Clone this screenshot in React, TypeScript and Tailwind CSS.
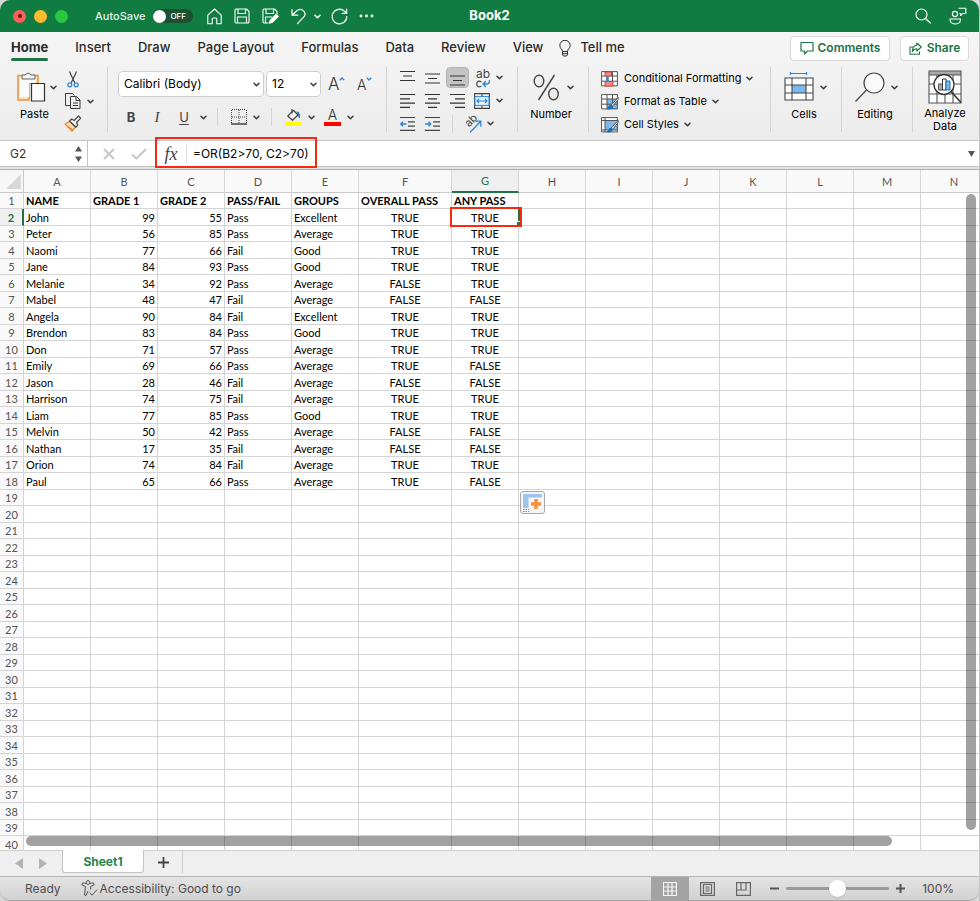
import React from 'react';

const columns = ['A', 'B', 'C', 'D', 'E', 'F', 'G', 'H', 'I', 'J', 'K', 'L', 'M', 'N'];

const headings = ['NAME', 'GRADE 1', 'GRADE 2', 'PASS/FAIL', 'GROUPS', 'OVERALL PASS', 'ANY PASS'];

const records = [
  ['John', '99', '55', 'Pass', 'Excellent', 'TRUE', 'TRUE'],
  ['Peter', '56', '85', 'Pass', 'Average', 'TRUE', 'TRUE'],
  ['Naomi', '77', '66', 'Fail', 'Good', 'TRUE', 'TRUE'],
  ['Jane', '84', '93', 'Pass', 'Good', 'TRUE', 'TRUE'],
  ['Melanie', '34', '92', 'Pass', 'Average', 'FALSE', 'TRUE'],
  ['Mabel', '48', '47', 'Fail', 'Average', 'FALSE', 'FALSE'],
  ['Angela', '90', '84', 'Fail', 'Excellent', 'TRUE', 'TRUE'],
  ['Brendon', '83', '84', 'Pass', 'Good', 'TRUE', 'TRUE'],
  ['Don', '71', '57', 'Pass', 'Average', 'TRUE', 'TRUE'],
  ['Emily', '69', '66', 'Pass', 'Average', 'TRUE', 'FALSE'],
  ['Jason', '28', '46', 'Fail', 'Average', 'FALSE', 'FALSE'],
  ['Harrison', '74', '75', 'Fail', 'Average', 'TRUE', 'TRUE'],
  ['Liam', '77', '85', 'Pass', 'Good', 'TRUE', 'TRUE'],
  ['Melvin', '50', '42', 'Pass', 'Average', 'FALSE', 'FALSE'],
  ['Nathan', '17', '35', 'Fail', 'Average', 'FALSE', 'FALSE'],
  ['Orion', '74', '84', 'Fail', 'Average', 'TRUE', 'TRUE'],
  ['Paul', '65', '66', 'Pass', 'Average', 'TRUE', 'FALSE'],
];

const sheet = [headings, ...records];
const rowNumbers = Array.from({ length: 40 }, (_, i) => i + 1);

const alignments = ['text-left', 'text-right', 'text-right', 'text-left', 'text-left', 'text-center', 'text-center'];

const Caret = ({ className = 'text-[#3b3b3b]' }: { className?: string }) => (
  <svg width="7" height="7" viewBox="0 0 7 7" fill="none" stroke="currentColor" strokeWidth="1.5" strokeLinecap="round" strokeLinejoin="round" className={`shrink-0 ${className}`}>
    <path d="M1 2.2 3.5 4.8 6 2.2" />
  </svg>
);

const TitleBar = () => (
  <header className="relative flex h-8 shrink-0 items-center justify-between rounded-t-[10px] bg-[#107c41] pl-[13px] pr-3 text-white">
    <div className="flex items-center">
      <div className="flex gap-2">
        <button aria-label="Close" className="flex size-[13px] items-center justify-center rounded-full bg-[#fe5f57]">
          <span className="size-1 rounded-full bg-[#7a0b06]" />
        </button>
        <button aria-label="Minimize" className="size-[13px] rounded-full bg-[#febb2e]" />
        <button aria-label="Zoom window" className="size-[13px] rounded-full bg-[#28c840]" />
      </div>
      <label className="ml-[27px] flex items-center gap-2 text-[11px] font-medium text-[#e3f0e8]">
        AutoSave
        <input type="checkbox" className="peer sr-only" />
        <span className="flex h-[14px] w-10 items-center gap-1 rounded-full bg-[#1d4f33] text-[8px] text-white">
          <span className="size-[13px] rounded-full bg-white" />
          OFF
        </span>
      </label>
      <button aria-label="Home" className="ml-[14px]">
        <svg width="15" height="17" viewBox="0 0 15 17" fill="none" stroke="currentColor" strokeWidth="1.1" strokeLinejoin="round">
          <path d="M.8 7.2 7.5 1l6.7 6.2v8.6H9.8V11a1 1 0 0 0-1-1H6.200a1 1 0 0 0-1 1v4.800H.8z" />
        </svg>
      </button>
      <button aria-label="Save" className="ml-3">
        <svg width="16" height="16" viewBox="0 0 16 16" fill="none" stroke="currentColor" strokeWidth="1.1" strokeLinejoin="round">
          <path d="M1 2a1 1 0 0 1 1-1h10.500L15 3.500V14a1 1 0 0 1-1 1H2a1 1 0 0 1-1-1zM4 1v4.500h7.500V1M3.500 15V9h9v6" />
        </svg>
      </button>
      <button aria-label="Save a copy" className="ml-3">
        <svg width="17" height="16" viewBox="0 0 17 16" fill="none" stroke="currentColor" strokeWidth="1.1" strokeLinejoin="round">
          <path d="M6.500 15H2a1 1 0 0 1-1-1V2a1 1 0 0 1 1-1h10.500L15 3.500V6M4 1v4.500h7.500V1M3.500 15V9H10" />
          <path d="m7.500 15.200.8-3 6-6 2 2.100-6 6z" fill="currentColor" />
        </svg>
      </button>
      <button aria-label="Undo" className="ml-3">
        <svg width="15" height="17" viewBox="0 0 15 17" fill="none" stroke="currentColor" strokeWidth="1.2" strokeLinecap="round">
          <path d="M1 1.500v5.700h5.700M1.200 7 5.600 3c5-4 11 1.500 7 6.200L6.500 15.700" />
        </svg>
      </button>
      <button aria-label="Undo history" className="ml-2"><Caret className="text-white" /></button>
      <button aria-label="Redo" className="ml-[10px]">
        <svg width="17" height="17" viewBox="0 0 17 17" fill="none" stroke="currentColor" strokeWidth="1.200" strokeLinecap="round">
          <path d="M15.800 8.500a7.300 7.300 0 1 1-2.300-5.300l2 2M15.600 1v4.300h-4.400" />
        </svg>
      </button>
      <button aria-label="More" className="ml-[11px]">
        <svg width="15" height="4" viewBox="0 0 15 4" fill="currentColor">
          <circle cx="2" cy="2" r="1.400" /><circle cx="7.500" cy="2" r="1.400" /><circle cx="13" cy="2" r="1.400" />
        </svg>
      </button>
    </div>
    <h1 className="absolute left-1/2 -translate-x-1/2 text-[13px] font-bold">Book2</h1>
    <div className="flex items-center gap-[18px]">
      <button aria-label="Search">
        <svg width="16" height="16" viewBox="0 0 16 16" fill="none" stroke="currentColor" strokeWidth="1.200" strokeLinecap="round">
          <circle cx="6.500" cy="6.500" r="5.500" /><path d="m10.500 10.500 4.800 4.500" />
        </svg>
      </button>
      <button aria-label="Account">
        <svg width="18" height="18" viewBox="0 0 18 18" fill="none" stroke="currentColor" strokeWidth="1.100" strokeLinejoin="round">
          <circle cx="6" cy="7" r="2.600" />
          <path d="M1 12h10.500v.5c0 6-10.500 6-10.500 0zM9.500 1.200h7.300v5.300h-3.300l-2 2v-2h-1" />
        </svg>
      </button>
    </div>
  </header>
);

const TabBar = () => (
  <div className="flex h-8 items-center justify-between pl-[11px] pr-[10px]">
    <nav className="flex h-full items-center gap-[27px] text-[13px] font-medium text-[#2b2b2b]">
      <a href="#home" className="flex flex-col pt-[3px] font-bold">
        Home
        <span className="mt-px h-[3px] rounded-full bg-[#217346]" />
      </a>
      <a href="#insert">Insert</a>
      <a href="#draw">Draw</a>
      <a href="#layout">Page Layout</a>
      <a href="#formulas">Formulas</a>
      <a href="#data">Data</a>
      <a href="#review">Review</a>
      <a href="#view">View</a>
      <a href="#tellme" className="-ml-[11px] flex items-center gap-[9px]">
        <svg width="12" height="17" viewBox="0 0 12 17" fill="none" stroke="currentColor" strokeWidth="1">
          <path d="M3.500 11.500C3.500 9 .8 8.500.8 5.500a5.200 5.200 0 0 1 10.400 0c0 3-2.700 3.500-2.700 6zM3.500 11.500v3.300L4.500 16h3l1-1.200v-3.300M3.500 13.700h5" />
        </svg>
        Tell me
      </a>
    </nav>
    <div className="flex gap-[10px] text-[12px] font-semibold text-[#217346]">
      <button className="flex h-[25px] w-[100px] items-center justify-center gap-1 rounded border border-[#d9d9d9] bg-white">
        <svg width="14" height="14" viewBox="0 0 14 14" fill="none" stroke="currentColor" strokeWidth="1.200" strokeLinejoin="round">
          <path d="M1 1.500h12v8.500H7.500l-3 3v-3H1z" />
        </svg>
        Comments
      </button>
      <button className="flex h-[25px] w-[69px] items-center justify-center gap-[5px] rounded border border-[#d9d9d9] bg-white">
        <svg width="13" height="13" viewBox="0 0 13 13" fill="none" stroke="currentColor" strokeWidth="1.100" strokeLinejoin="round">
          <path d="M4 5H1v7.300h9.500V9.500M7.800 1l4.500 4-4.500 4V6.700C5.500 6.700 4.200 7.800 3.300 9.700 3.500 6 5 3.600 7.800 3.300z" />
        </svg>
        Share
      </button>
    </div>
  </div>
);

const ClipboardGroup = () => (
  <section className="flex w-[108px] shrink-0 border-r border-[#d4d4d4] pl-4">
    <button className="flex w-[43px] flex-col pt-1">
      <span className="flex items-center gap-[3px]">
        <svg width="31" height="32" viewBox="0 0 31 32" fill="none" className="shrink-0">
          <path d="M2 4.500h20V12h-9v17H2z" fill="#fbe3b8" stroke="#e8963f" strokeWidth="1.500" />
          <path d="M4 6.500h16V12h-7v14H4z" fill="#fafafa" />
          <path d="M6 8V4h3.500a3 3 0 0 1 5.500 0h4v4z" fill="#f5f5f5" stroke="#666" />
          <path d="M15.500 12.500h13V30h-13z" fill="#fafafa" stroke="#333" strokeWidth="1.200" />
        </svg>
        <Caret />
      </span>
      <span className="mt-1 w-[37px] text-center text-[11px] leading-[14px]">Paste</span>
    </button>
    <div className="ml-[5px] flex flex-col pt-[3px]">
      <button aria-label="Cut" className="h-[18px] pl-[3px]">
        <svg width="12" height="17" viewBox="0 0 12 17" fill="none">
          <path d="m2.500.5 5.300 11.500M9.500.5 4.200 12" stroke="#444" strokeWidth="1.200" />
          <circle cx="2.800" cy="13.800" r="2" stroke="#2b88d8" strokeWidth="1.300" /><circle cx="9.200" cy="13.800" r="2" stroke="#2b88d8" strokeWidth="1.300" />
        </svg>
      </button>
      <button aria-label="Copy" className="mt-1 flex h-[18px] items-center gap-[5px]">
        <svg width="18" height="18" viewBox="0 0 18 18" fill="none" stroke="#3b3b3b">
          <path d="M6.500 13.500h-5v-12h7l2 2M6.500 4.500h6l3.500 3.500v8.500H6.500zM12 4.500V8.500h4M9 11h5M9 13.500h5" />
        </svg>
        <Caret />
      </button>
      <button aria-label="Format painter" className="mt-1 h-[18px]">
        <svg width="18" height="17" viewBox="0 0 18 17" fill="none" strokeLinejoin="round">
          <path d="m1 9 5-2.500 5.500 5.500L8 16z" fill="#fbd9b0" stroke="#e8832a" strokeWidth="1.200" />
          <path d="m3 11.500 5.500 2.500" stroke="#e8832a" />
          <path d="m5.500 6 2.200-2 2.500 1.500L14.500 1l2.200 2.200L12.500 7.500l1.300 2.700L12 12.200z" fill="#f5f5f5" stroke="#444" strokeWidth="1.200" />
        </svg>
      </button>
    </div>
  </section>
);

const FontGroup = () => (
  <section className="w-[279px] shrink-0 border-r border-[#d4d4d4] pl-[10px] pt-1">
    <div className="flex items-center">
      <label className="relative flex items-center">
        <select aria-label="Font" className="h-[26px] w-[146px] appearance-none rounded border border-[#cfcfcf] bg-white pl-[5px] text-[12px]">
          <option>Calibri (Body)</option>
        </select>
        <span className="pointer-events-none absolute right-1"><Caret /></span>
      </label>
      <label className="relative ml-[2px] flex items-center">
        <select aria-label="Font size" className="h-[26px] w-[55px] appearance-none rounded border border-[#cfcfcf] bg-white pl-[5px] text-[12px]">
          <option>12</option>
        </select>
        <span className="pointer-events-none absolute right-1"><Caret /></span>
      </label>
      <button aria-label="Increase font size" className="ml-[7px] flex h-[22px] w-[17px] items-end leading-[22px]">
        <span className="text-[17px] font-light text-[#333]">A</span>
        <svg width="6" height="4" viewBox="0 0 6 4" fill="none" className="mb-[14px] shrink-0">
          <path d="M.8 3.200 3 1l2.200 2.200" stroke="#2b88d8" strokeWidth="1.300" />
        </svg>
      </button>
      <button aria-label="Decrease font size" className="ml-3 flex h-[22px] w-[17px] items-end leading-[20px]">
        <span className="text-[14px] font-light text-[#333]">A</span>
        <svg width="6" height="4" viewBox="0 0 6 4" fill="none" className="mb-[14px] shrink-0">
          <path d="M.8.8 3 3 5.200.8" stroke="#2b88d8" strokeWidth="1.300" />
        </svg>
      </button>
    </div>
    <div className="mt-[11px] flex h-[18px] items-center text-[13px] leading-[18px] text-[#444]">
      <button className="ml-[5px] w-4 text-center font-bold">B</button>
      <button className="ml-[10px] w-4 text-center font-['Liberation_Serif',serif] text-[15px] italic">I</button>
      <button className="ml-[11px] w-4 text-center underline underline-offset-2">U</button>
      <button aria-label="Underline styles" className="ml-2"><Caret /></button>
      <span className="ml-[10px] h-[18px] w-px bg-[#d4d4d4]" />
      <button aria-label="Borders" className="ml-[13px] flex items-center gap-[6px]">
        <svg width="16" height="16" viewBox="0 0 16 16" fill="none" stroke="#444">
          <path d="M.5 1v13M15.500 1v13M8 1v13M1 .5h14M1 8h14" strokeDasharray="1 1" />
          <path d="M0 15h16" strokeWidth="1.500" />
        </svg>
        <Caret />
      </button>
      <span className="ml-[11px] h-[18px] w-px bg-[#d4d4d4]" />
      <button aria-label="Fill colour" className="ml-[13px] flex items-center gap-[6px]">
        <svg width="17" height="18" viewBox="0 0 17 18" fill="none">
          <path d="M0 14h17v4H0z" fill="#ffff00" />
          <path d="M8.500 2.500 2.800 8l4.700 4.300L13 7z" stroke="#444" strokeWidth="1.200" fill="#f5f5f5" strokeLinejoin="round" />
          <path d="M7 1v4.500" stroke="#444" strokeWidth="1.200" />
          <path d="M11.500 3.500c2.500-.5 3.800 2.500 3.500 6.500-1.500 0-1.800-1.500-2-3.500z" fill="#1f6fb8" />
        </svg>
        <Caret />
      </button>
      <button aria-label="Font colour" className="ml-[9px] flex items-center gap-[6px]">
        <span className="flex h-[18px] w-[17px] items-center justify-center border-b-4 border-[#f00] text-[14px] font-light leading-[18px] text-[#333]">A</span>
        <Caret />
      </button>
    </div>
  </section>
);

const Lines = ({ d }: { d: string }) => (
  <svg width="15" height="16" viewBox="0 0 15 16" fill="none" stroke="#333" strokeWidth="1.200">
    <path d={d} />
  </svg>
);

const AlignGroup = () => (
  <section className="flex w-[131px] shrink-0 flex-col gap-[2px] border-r border-[#d4d4d4] pl-[9px] *:shrink-0">
    <div className="flex h-[21px] items-center">
      <button aria-label="Top align" className="w-[25px] px-1"><Lines d="M0 1.500h15M3 6h9M0 10.500h15" /></button>
      <button aria-label="Middle align" className="w-[25px] px-1"><Lines d="M0 4h15M3 8.500h9M0 13h15" /></button>
      <button aria-label="Bottom align" className="flex h-[21px] w-[23px] items-center justify-center rounded-sm border border-[#b5b5b5] bg-[#c4c4c4]"><Lines d="M0 6h15M3 10.500h9M0 15h15" /></button>
      <button aria-label="Wrap text" className="ml-[6px] flex items-center gap-[5px]">
        <span className="flex h-[20px] w-4 flex-col items-center text-[12px] leading-[12px] text-[#444]">
          ab
          <svg width="14" height="8" viewBox="0 0 14 8" fill="none" strokeLinecap="round">
            <path d="M5 1.700C2.500.200.700 1.800.700 4s1.800 3.800 4.300 2.300" stroke="#444" strokeWidth="1.200" />
            <path d="M13.300.700v1c0 1.500-1 2.300-2.500 2.300H7M9.500 1.500 7 4l2.500 2.600" stroke="#2b88d8" strokeWidth="1.400" />
          </svg>
        </span>
        <Caret />
      </button>
    </div>
    <div className="flex h-[21px] items-center">
      <button aria-label="Align left" className="w-[25px] px-1"><Lines d="M0 1.500h15M0 5.800h10M0 10.100h15M0 14.400h10" /></button>
      <button aria-label="Center" className="w-[25px] px-1"><Lines d="M0 1.500h15M3 5.800h9M0 10.100h15M3 14.400h9" /></button>
      <button aria-label="Align right" className="w-[25px] px-1"><Lines d="M0 1.500h15M5 5.800h10M0 10.100h15M5 14.400h10" /></button>
      <button aria-label="Merge cells" className="ml-[3px] flex items-center gap-[6px]">
        <svg width="16" height="16" viewBox="0 0 16 16" fill="none">
          <path d="M.6.600h14.800v14.800H.6zM8 .6v3M8 12.500v3" stroke="#444" strokeWidth="1.100" />
          <path d="M1 3.600h14v8.800H1z" fill="#e5f2fc" stroke="#2b88d8" />
          <path d="M3 8h10M5 6 3 8l2 2M11 6l2 2-2 2" stroke="#2b88d8" strokeWidth="1.200" />
        </svg>
        <Caret />
      </button>
    </div>
    <div className="flex h-[21px] items-center">
      <button aria-label="Decrease indent" className="w-[25px] px-1">
        <svg width="15" height="16" viewBox="0 0 15 16" fill="none">
          <path d="M0 1.500h15M8 5.800h7M8 10.100h7M0 14.400h15" stroke="#444" strokeWidth="1.200" />
          <path d="M6.500 8H1M3 5.800.8 8 3 10.200" stroke="#2b88d8" strokeWidth="1.400" />
        </svg>
      </button>
      <button aria-label="Increase indent" className="w-[25px] px-1">
        <svg width="15" height="16" viewBox="0 0 15 16" fill="none">
          <path d="M0 1.500h15M8 5.800h7M8 10.100h7M0 14.400h15" stroke="#444" strokeWidth="1.200" />
          <path d="M0 8h5.500M3.500 5.800 5.700 8 3.500 10.200" stroke="#2b88d8" strokeWidth="1.400" />
        </svg>
      </button>
      <span className="ml-[6px] h-[18px] w-px bg-[#d4d4d4]" />
      <button aria-label="Orientation" className="ml-[11px] flex items-center gap-[5px]">
        <svg width="18" height="18" viewBox="0 0 18 18" fill="none" strokeLinecap="round" className="overflow-visible">
          <text x="5" y="12.500" fontSize="11" fill="#444" transform="rotate(-45 5 12.500)">ab</text>
          <path d="M6.500 17 16.500 6.500M12.200 6.200h4.600V11" stroke="#2b88d8" strokeWidth="1.300" />
        </svg>
        <Caret />
      </button>
    </div>
  </section>
);

const NumberGroup = () => (
  <section className="w-[71px] shrink-0 border-r border-[#d4d4d4]">
    <button className="flex w-full flex-col pt-1">
      <span className="flex h-8 items-center gap-[7px] pl-[15px]">
        <svg width="27" height="27" viewBox="0 0 27 27" fill="none" stroke="#444" strokeWidth="1.400">
          <ellipse cx="6" cy="7" rx="4.800" ry="5.800" /><ellipse cx="20.500" cy="20" rx="4.800" ry="5.800" /><path d="M21.500 1 5.500 26" />
        </svg>
        <Caret />
      </span>
      <span className="mt-1 w-[66px] text-center text-[11px] leading-[14px]">Number</span>
    </button>
  </section>
);

const StyleIcon = ({ kind }: { kind: 'rules' | 'table' | 'cell' }) => (
  <svg width="18" height="16" viewBox="0 0 18 16" fill="none" className="shrink-0">
    <path d="M.6.600h15.800v14.300H.6z" fill="#fff" />
    {kind === 'table' && <path d="M6 5h10.500v10H6z" fill="#7db8ea" />}
    {kind === 'cell' && <path d="M4 3.500h12.500V13H4z" fill="#7db8ea" />}
    {kind === 'cell'
      ? <path d="M.6.600h15.800v14.300H.6zM4 .6v14.300M.6 3.500h15.800M.6 13h15.800" stroke="#555" />
      : <path d="M.6.600h15.800v14.300H.6zM6 .6v14.300M11.500 .6v14.300M.6 5h15.800M.6 10.200h15.800" stroke="#555" />}
    {kind === 'rules' && (
      <>
        <path d="M4 1h6.500v4H4zM4 10.500h8V15H4z" fill="#f28b85" stroke="#e03c31" />
        <path d="M6.500 5.500v4.500" stroke="#2b88d8" strokeWidth="2.500" />
      </>
    )}
    {kind !== 'rules' && (
      <>
        <path d="m17.200 3.500-7 7.500 1.500 1.200 6-7.500z" fill="#f5f5f5" stroke="#444" strokeWidth=".8" />
        <path d="M10 10.800c-3 .2-2 3-5 4.200 3 1 6.500.5 7-2.700z" fill="#1f6fb8" />
      </>
    )}
  </svg>
);

const StylesGroup = () => (
  <section className="flex w-[182px] shrink-0 flex-col gap-[2px] border-r border-[#d4d4d4] pl-3 pt-px text-[11px] *:shrink-0">
    <button className="flex h-[21px] items-center gap-[5px]"><StyleIcon kind="rules" />Conditional Formatting<Caret /></button>
    <button className="flex h-[21px] items-center gap-[5px]"><StyleIcon kind="table" />Format as Table<Caret /></button>
    <button className="flex h-[21px] items-center gap-[5px]"><StyleIcon kind="cell" />Cell Styles<Caret /></button>
  </section>
);

const Ribbon = () => (
  <div className="flex h-[76px] pb-2 pt-[3px] text-black">
    <ClipboardGroup />
    <FontGroup />
    <AlignGroup />
    <NumberGroup />
    <StylesGroup />
    <section className="w-[71px] shrink-0 border-r border-[#d4d4d4]">
      <button className="flex w-full flex-col pl-[13px] pt-1">
        <span className="flex h-8 items-center gap-[6px]">
          <svg width="30" height="30" viewBox="0 0 30 30" fill="none">
            <path d="M6.500 1.500h16M6.500 0v3M22.500 0v3" stroke="#2b88d8" strokeWidth="1.200" />
            <path d="M1 6h28v22H1z" fill="#fff" />
            <path d="M8 13h14v8H8z" fill="#7db8ea" />
            <path d="M1 6h28v22H1zM8 6v22M22 6v22M1 13h28M1 21h28" stroke="#444" strokeWidth="1.100" />
          </svg>
          <Caret />
        </span>
        <span className="mt-1 w-10 text-center text-[11px] leading-[14px]">Cells</span>
      </button>
    </section>
    <section className="w-[71px] shrink-0 border-r border-[#d4d4d4]">
      <button className="flex w-full flex-col pl-[13px] pt-1">
        <span className="flex h-8 items-center gap-[6px]">
          <svg width="30" height="31" viewBox="0 0 30 31" fill="none" stroke="#444" strokeWidth="1.200">
            <circle cx="19" cy="11" r="10" fill="#fafafa" /><path d="M11.500 18 .5 29.500" />
          </svg>
          <Caret />
        </span>
        <span className="mt-1 w-10 text-center text-[11px] leading-[14px]">Editing</span>
      </button>
    </section>
    <button className="flex w-16 shrink-0 flex-col items-center pt-[3px] text-[11px] leading-[13px]">
      <svg width="34" height="34" viewBox="0 0 34 34" fill="none" className="mb-[3px] shrink-0">
        <path d="M1 1h32v32H1z" fill="#fff" />
        <path d="M1 1h32v4H1z" fill="#aaa" />
        <path d="M1 1h32v32H1zM1 5h32M9 5v28M17 5v28M25 5v28M1 14h32M1 24h32" stroke="#555" strokeWidth="1.100" />
        <circle cx="16" cy="14.500" r="10" fill="#fff" stroke="#333" strokeWidth="1.300" />
        <path d="m23 21.500 10 11" stroke="#333" strokeWidth="1.600" />
        <path d="M10.500 14h4v6h-4z" fill="#aaa" stroke="#555" />
        <path d="M14.500 9h3.500v11h-3.500z" fill="#fff" stroke="#333" />
        <path d="M18 11h4v9h-4z" fill="#7db8ea" stroke="#1f6fb8" />
      </svg>
      <span>Analyze</span>
      <span>Data</span>
    </button>
  </div>
);

const FormulaBar = () => (
  <div className="relative z-10 flex h-[30px] shrink-0 border-b border-[#a9b0ac] bg-[#e2e5e3] pb-[2px]">
    <div className="flex w-[88px] items-center border-y border-r border-[#c4c4c4] bg-white pl-[10px] pr-[5px]">
      <input aria-label="Name box" defaultValue="G2" className="w-full min-w-0 text-[12px] text-[#333] outline-none" />
      <svg width="7" height="17" viewBox="0 0 7 17" fill="#555" className="shrink-0">
        <path d="M3.500 1 7 6.500H0zM3.500 17 0 11.500h7z" />
      </svg>
    </div>
    <div className="relative flex flex-1 items-center border-y border-[#c4c4c4] bg-white pl-[15px] pr-1">
      <button aria-label="Cancel">
        <svg width="12" height="12" viewBox="0 0 12 12" stroke="#c8c8c8" strokeWidth="2"><path d="m1 1 10 10M11 1 1 11" /></svg>
      </button>
      <button aria-label="Enter" className="ml-4">
        <svg width="16" height="12" viewBox="0 0 16 12" fill="none" stroke="#c8c8c8" strokeWidth="2.200"><path d="m1 6.500 4.500 4L15 1" /></svg>
      </button>
      <div className="pointer-events-none absolute -top-1 left-[67px] h-[31px] w-[162px] border-2 border-[#f9290f]" />
      <button aria-label="Insert function" className="ml-4 w-4 font-['Liberation_Serif',serif] text-[18px] italic leading-5 text-[#444]">fx</button>
      <span className="ml-[7px] h-[17px] w-px bg-[#dcdcdc]" />
      <input aria-label="Formula" defaultValue="=OR(B2>70, C2>70)" className="ml-[6px] min-w-0 flex-1 text-[12px] text-black outline-none" />
      <button aria-label="Expand formula bar">
        <svg width="7" height="6" viewBox="0 0 7 6" fill="#555"><path d="M0 0h7L3.500 6z" /></svg>
      </button>
    </div>
  </div>
);

const Grid = () => (
  <main className="relative min-h-0 flex-1 overflow-hidden bg-white font-['Lato',sans-serif]">
    <table className="w-[988px] table-fixed border-separate border-spacing-0 text-[11px] leading-[15px]">
      <colgroup>
        <col className="w-6" />
        {columns.map((c) => <col key={c} className={c === 'F' ? 'w-[93px]' : 'w-[67px]'} />)}
      </colgroup>
      <thead>
        <tr>
          <th className="h-[23px] border-b border-r border-[#c9c9c9] bg-[#f7f7f7] p-0">
            <svg width="15" height="15" viewBox="0 0 15 15" className="ml-[6px] mt-px"><path d="M15 0v15H0z" fill="#d8d8d8" /></svg>
          </th>
          {columns.map((c) => (
            <th
              key={c}
              scope="col"
              className={c === 'G'
                ? 'h-[23px] border-b-2 border-r border-b-[#217346] border-r-[#d4d4d4] bg-[#efefef] p-0 font-normal text-[#217346]'
                : 'h-[23px] border-b border-r border-b-[#c9c9c9] border-r-[#d8d8d8] bg-[#f9f9f9] p-0 font-normal text-[#555]'}
            >
              {c}
            </th>
          ))}
        </tr>
      </thead>
      <tbody>
        {rowNumbers.map((n) => (
          <tr key={n} className="h-4 even:h-[17px]">
            <th
              scope="row"
              className={n === 2
                ? 'border-b border-r-2 border-b-[#d4d4d4] border-r-[#217346] bg-[#efefef] p-0 font-bold text-[#217346]'
                : 'border-b border-r border-[#d4d4d4] bg-[#f9f9f9] p-0 font-normal text-[#555]'}
            >
              {n}
            </th>
            {columns.map((c, i) => (
              <td
                key={c}
                className={`relative whitespace-nowrap border-b border-r border-[#d4d4d4] px-[2px] py-0 text-black ${n === 1 ? 'text-left font-bold' : alignments[i] ?? ''}`}
              >
                {sheet[n - 1]?.[i]}
                {c === 'G' && n === 2 && (
                  <span className="absolute -bottom-[2px] -left-[2px] -right-1 -top-[2px] z-10 border-2 border-[#f9290f]">
                    <span className="absolute right-0 top-0 h-3 w-[2px] bg-[#217346]" />
                    <span className="absolute bottom-0 right-0 size-[3px] bg-[#217346]" />
                  </span>
                )}
                {c === 'H' && n === 19 && (
                  <button aria-label="Auto fill options" className="absolute left-[1px] top-[1px] z-10 flex h-[23px] w-[25px] items-center justify-center rounded-[3px] border border-[#a8a8a8] bg-[#f6f6f6]">
                    <svg width="20" height="18" viewBox="0 0 20 18">
                      <path d="M0 0h19v3.500H5.500V14H0z" fill="#9dc3ee" />
                      <path d="M0 15.500h6M0 17.500h6" stroke="#888" strokeDasharray="1.500 1" />
                      <path d="M11.300 5h3.400v3.300H18v3.400h-3.300V15h-3.400v-3.300H8V8.300h3.300z" fill="#f7923a" />
                    </svg>
                  </button>
                )}
              </td>
            ))}
          </tr>
        ))}
      </tbody>
    </table>
    <div className="absolute bottom-5 right-[3px] top-6 z-20 w-[10px] rounded-full bg-black/37" />
    <div className="absolute bottom-1 left-[26px] right-[87px] z-20 h-[10px] rounded-full bg-black/37" />
  </main>
);

const SheetTabs = () => (
  <div className="flex h-[27px] shrink-0 border-b border-t border-b-[#b5b5b5] border-t-[#cfcfcf] bg-[#efefef] pl-[15px]">
    <button aria-label="Previous sheet">
      <svg width="8" height="11" viewBox="0 0 8 11" fill="#b3b3b3"><path d="M8 0v11L0 5.500z" /></svg>
    </button>
    <button aria-label="Next sheet" className="ml-4">
      <svg width="8" height="11" viewBox="0 0 8 11" fill="#b3b3b3"><path d="M0 0v11l8-5.500z" /></svg>
    </button>
    <button className="-mt-px ml-[15px] h-[23px] w-[82px] rounded-b-[3px] border border-t-0 border-[#c4c4c4] bg-white pt-[2px] text-[12px] font-bold text-[#1f8449]">Sheet1</button>
    <button aria-label="Add sheet" className="flex h-[22px] w-[39px] items-center justify-center border-r border-[#cfcfcf]">
      <svg width="11" height="11" viewBox="0 0 11 11" stroke="#444" strokeWidth="1.800"><path d="M5.500 0v11M0 5.500h11" /></svg>
    </button>
  </div>
);

const StatusBar = () => (
  <footer className="flex h-6 shrink-0 items-center justify-between rounded-b-[10px] border-b border-[#a5a5a5] bg-linear-to-b from-[#e3e3e3] to-[#d2d2d2] pl-[25px] pr-[25px] text-[12px] text-[#4d4d4d]">
    <div className="flex items-center">
      <span>Ready</span>
      <button className="ml-5 flex items-center gap-[2px]">
        <svg width="17" height="17" viewBox="0 0 17 17" fill="none" stroke="#555" strokeLinejoin="round">
          <circle cx="7" cy="2.500" r="1.900" />
          <path d="M5 3.500 1.500 2.800.8 5l3.700 1.500L3.500 15l1.500.5L7 11M9 3.500l3.500-.7.7 2.200-3.700 1.500.3 3M8.500 12.500l2.500 2.700 5-5.500" />
        </svg>
        Accessibility: Good to go
      </button>
    </div>
    <div className="flex h-full items-center">
      <button aria-label="Normal view" className="flex h-full w-[38px] items-center justify-center bg-[#a3a3a3]">
        <svg width="14" height="14" viewBox="0 0 14 14" fill="none" stroke="#f5f5f5">
          <path d="M.5.5h13v13H.5zM5 .5v13M9 .5v13M.5 5h13M.5 9h13" strokeWidth="1.200" />
        </svg>
      </button>
      <button aria-label="Page layout view" className="ml-[11px]">
        <svg width="15" height="14" viewBox="0 0 15 14" fill="none" stroke="#666" strokeWidth="1.200">
          <path d="M.6.600h13.800v12.800H.6zM3.500 2.500h8v9h-8zM5.500 5h4M5.500 7h4M5.500 9h4" />
        </svg>
      </button>
      <button aria-label="Page break view" className="ml-[21px]">
        <svg width="15" height="14" viewBox="0 0 15 14" fill="none" stroke="#666" strokeWidth="1.200">
          <path d="M.6.600h13.800v12.800H.6zM.6 8h9.400V.6M5 .6V8" />
        </svg>
      </button>
      <button aria-label="Zoom out" className="ml-[19px]">
        <svg width="9" height="9" viewBox="0 0 9 9" stroke="#555" strokeWidth="2"><path d="M0 4.500h9" /></svg>
      </button>
      <input
        type="range"
        aria-label="Zoom"
        defaultValue={50}
        className="ml-[7px] h-[3px] w-[103px] appearance-none rounded-full bg-[#9b9b9b] [&::-webkit-slider-thumb]:size-[17px] [&::-webkit-slider-thumb]:appearance-none [&::-webkit-slider-thumb]:rounded-full [&::-webkit-slider-thumb]:bg-white [&::-webkit-slider-thumb]:shadow-sm"
      />
      <button aria-label="Zoom in" className="ml-[7px]">
        <svg width="9" height="9" viewBox="0 0 9 9" stroke="#555" strokeWidth="2"><path d="M0 4.500h9M4.500 0v9" /></svg>
      </button>
      <span className="ml-[17px]">100%</span>
    </div>
  </footer>
);

export default function App() {
  return (
    <div className="flex h-screen flex-col overflow-hidden border-r border-[#c4c4c4] bg-[#d9d9d9] font-['Inter',sans-serif]">
      <TitleBar />
      <div className="shrink-0 bg-linear-to-b from-[#f5f5f5] to-[#ececec]">
        <TabBar />
        <Ribbon />
      </div>
      <FormulaBar />
      <Grid />
      <SheetTabs />
      <StatusBar />
    </div>
  );
}
